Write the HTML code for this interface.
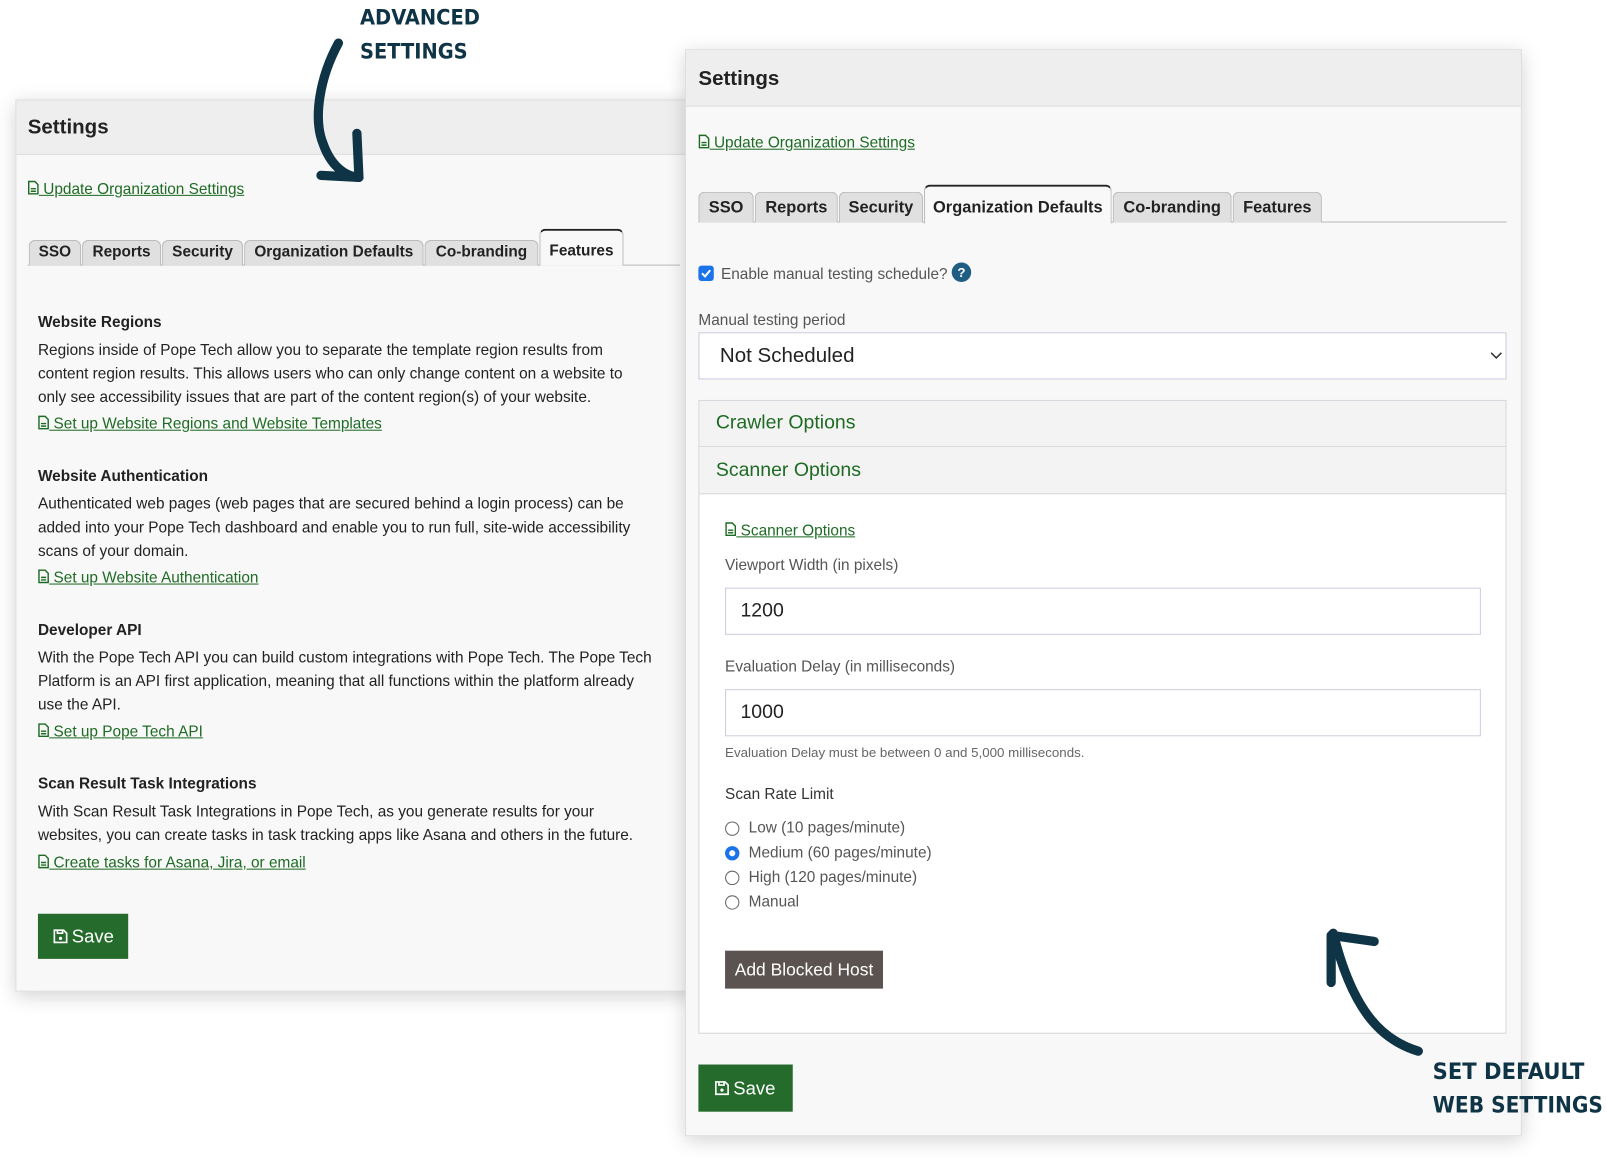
<!DOCTYPE html>
<html><head><meta charset="utf-8"><style>
html,body{margin:0;padding:0;width:1606px;height:1167px;overflow:hidden;background:#fff;}
#w{position:absolute;left:0;top:0;width:1566px;height:1138px;transform:scale(1.02554);transform-origin:0 0;font-family:"Liberation Sans",Arial,sans-serif;color:#222;}
.a{position:absolute;white-space:nowrap;}
.panel{position:absolute;background:#f8f8f8;border:1px solid #ddd;box-shadow:0 4px 18px rgba(0,0,0,.18);}
.hdr{position:absolute;left:0;right:0;top:0;background:#eeeeee;border-bottom:1px solid #ddd;}
.ttl{font-weight:bold;font-size:20px;color:#222;}
.lnk{color:#1e6b24;text-decoration:underline;font-size:15px;}
.tab{position:absolute;background:#e0e0e0;border:1px solid #bbb;border-bottom:none;border-radius:6px 6px 0 0;font-weight:bold;font-size:15px;text-align:center;box-sizing:border-box;color:#222;}
.tab.act{background:#f8f8f8;border:1px solid #bbb;border-top:2px solid #222;border-bottom:none;}
.h{font-weight:bold;font-size:15px;}
.p{font-size:15px;line-height:23px;color:#222;white-space:normal;}
.save{position:absolute;background:#256b2c;color:#fff;font-size:18px;box-sizing:border-box;}
.hand{font-family:"DejaVu Sans Condensed","DejaVu Sans",sans-serif;font-weight:bold;color:#0e3446;}
.inp{position:absolute;background:#fff;border:1px solid #ccd;box-sizing:border-box;}
.lbl{font-size:15px;color:#555;}
.radio{position:absolute;width:14px;height:14px;border:1px solid #666;border-radius:50%;box-sizing:border-box;background:#fff;}
</style></head><body><div id="w">

<!-- left panel -->
<div class="panel" style="left:15px;top:97px;width:660px;height:868px;">
  <div class="hdr" style="height:52px;"></div>
</div>
<div class="a ttl" style="left:27px;top:113px;">Settings</div>
<div class="a lnk" style="left:27px;top:176px;"><svg width="11" height="14" viewBox="0 0 11 14" style="vertical-align:-1px"><path d="M1 1h6l3 3v9H1z M3 8h5M3 10.5h5" fill="none" stroke="#1e6b24" stroke-width="1.4"/></svg> Update Organization Settings</div>
<div class="a" style="left:27px;top:258px;width:636px;border-top:1px solid #bbb;"></div>
<div class="tab" style="left:28px;top:234px;width:51px;height:25px;line-height:22px;">SSO</div>
<div class="tab" style="left:80px;top:234px;width:77px;height:25px;line-height:22px;">Reports</div>
<div class="tab" style="left:158px;top:234px;width:79px;height:25px;line-height:22px;">Security</div>
<div class="tab" style="left:238px;top:234px;width:175px;height:25px;line-height:22px;">Organization Defaults</div>
<div class="tab" style="left:414px;top:234px;width:111px;height:25px;line-height:22px;">Co-branding</div>
<div class="tab act" style="left:526px;top:223px;width:82px;height:36px;line-height:40px;">Features</div>

<div class="a h" style="left:37px;top:306px;">Website Regions</div>
<div class="a p" style="left:37px;top:330px;width:588px;">Regions inside of Pope Tech allow you to separate the template region results from content region results. This allows users who can only change content on a website to only see accessibility issues that are part of the content region(s) of your website.</div>
<div class="a lnk" style="left:37px;top:405px;"><svg width="11" height="14" viewBox="0 0 11 14" style="vertical-align:-1px"><path d="M1 1h6l3 3v9H1z M3 8h5M3 10.5h5" fill="none" stroke="#1e6b24" stroke-width="1.4"/></svg> Set up Website Regions and Website Templates</div>

<div class="a h" style="left:37px;top:456px;">Website Authentication</div>
<div class="a p" style="left:37px;top:480px;width:600px;">Authenticated web pages (web pages that are secured behind a login process) can be added into your Pope Tech dashboard and enable you to run full, site-wide accessibility scans of your domain.</div>
<div class="a lnk" style="left:37px;top:555px;"><svg width="11" height="14" viewBox="0 0 11 14" style="vertical-align:-1px"><path d="M1 1h6l3 3v9H1z M3 8h5M3 10.5h5" fill="none" stroke="#1e6b24" stroke-width="1.4"/></svg> Set up Website Authentication</div>

<div class="a h" style="left:37px;top:606px;">Developer API</div>
<div class="a p" style="left:37px;top:630px;width:608px;">With the Pope Tech API you can build custom integrations with Pope Tech. The Pope Tech Platform is an API first application, meaning that all functions within the platform already use the API.</div>
<div class="a lnk" style="left:37px;top:705px;"><svg width="11" height="14" viewBox="0 0 11 14" style="vertical-align:-1px"><path d="M1 1h6l3 3v9H1z M3 8h5M3 10.5h5" fill="none" stroke="#1e6b24" stroke-width="1.4"/></svg> Set up Pope Tech API</div>

<div class="a h" style="left:37px;top:756px;">Scan Result Task Integrations</div>
<div class="a p" style="left:37px;top:780px;width:590px;">With Scan Result Task Integrations in Pope Tech, as you generate results for your websites, you can create tasks in task tracking apps like Asana and others in the future.</div>
<div class="a lnk" style="left:37px;top:833px;"><svg width="11" height="14" viewBox="0 0 11 14" style="vertical-align:-1px"><path d="M1 1h6l3 3v9H1z M3 8h5M3 10.5h5" fill="none" stroke="#1e6b24" stroke-width="1.4"/></svg> Create tasks for Asana, Jira, or email</div>

<div class="save" style="left:37px;top:891px;width:88px;height:44px;line-height:44px;padding-left:14px;"><svg width="16" height="16" viewBox="0 0 16 16" style="vertical-align:-2px;margin-right:3px"><path d="M2 2h9l3 3v9H2z M5 2v3h5V2" fill="none" stroke="#fff" stroke-width="1.6"/><circle cx="8" cy="10" r="1.6" fill="#fff"/></svg>Save</div>

<!-- right panel -->
<div class="panel" style="left:668px;top:48px;width:814px;height:1058px;background:#f8f8f8;">
  <div class="hdr" style="height:54px;"></div>
</div>
<div class="a ttl" style="left:681px;top:66px;">Settings</div>
<div class="a lnk" style="left:681px;top:131px;"><svg width="11" height="14" viewBox="0 0 11 14" style="vertical-align:-1px"><path d="M1 1h6l3 3v9H1z M3 8h5M3 10.5h5" fill="none" stroke="#1e6b24" stroke-width="1.4"/></svg> Update Organization Settings</div>
<div class="a" style="left:681px;top:216px;width:788px;border-top:1px solid #bbb;"></div>
<div class="tab" style="left:681px;top:187px;width:54px;height:30px;line-height:30px;font-size:16px;">SSO</div>
<div class="tab" style="left:736px;top:187px;width:81px;height:30px;line-height:30px;font-size:16px;">Reports</div>
<div class="tab" style="left:818px;top:187px;width:82px;height:30px;line-height:30px;font-size:16px;">Security</div>
<div class="tab act" style="left:901px;top:180px;width:183px;height:38px;line-height:42px;font-size:16px;">Organization Defaults</div>
<div class="tab" style="left:1085px;top:187px;width:116px;height:30px;line-height:30px;font-size:16px;">Co-branding</div>
<div class="tab" style="left:1202px;top:187px;width:87px;height:30px;line-height:30px;font-size:16px;">Features</div>

<div class="a" style="left:681px;top:259px;width:15px;height:15px;background:#1a73e8;border-radius:3px;"><svg width="15" height="15" viewBox="0 0 15 15" style="position:absolute;left:0;top:0"><path d="M3.5 7.5l3 3 5-6" fill="none" stroke="#fff" stroke-width="2"/></svg></div>
<div class="a lbl" style="left:703px;top:259px;">Enable manual testing schedule?</div>
<div class="a" style="left:928px;top:256px;width:19px;height:19px;border-radius:50%;background:#1f5d83;color:#fff;font-size:13px;font-weight:bold;text-align:center;line-height:19px;">?</div>

<div class="a lbl" style="left:681px;top:304px;">Manual testing period</div>
<div class="inp" style="left:681px;top:324px;width:788px;height:46px;"></div>
<div class="a" style="left:702px;top:336px;font-size:20px;color:#222;">Not Scheduled</div>
<svg class="a" style="left:1453px;top:343px" width="12" height="8" viewBox="0 0 12 8"><path d="M1 1l5 5 5-5" fill="none" stroke="#333" stroke-width="1.5"/></svg>

<div class="a" style="left:681px;top:390px;width:786px;height:616px;border:1px solid #d4d8dd;background:#fff;"></div>
<div class="a" style="left:682px;top:391px;width:786px;height:44px;background:#f3f3f3;border-bottom:1px solid #d4d8dd;"></div>
<div class="a" style="left:682px;top:436px;width:786px;height:45px;background:#f3f3f3;border-bottom:1px solid #d4d8dd;"></div>
<div class="a" style="left:698px;top:402px;font-size:19px;color:#1e6b24;">Crawler Options</div>
<div class="a" style="left:698px;top:448px;font-size:19px;color:#1e6b24;">Scanner Options</div>

<div class="a lnk" style="left:707px;top:509px;"><svg width="11" height="14" viewBox="0 0 11 14" style="vertical-align:-1px"><path d="M1 1h6l3 3v9H1z M3 8h5M3 10.5h5" fill="none" stroke="#1e6b24" stroke-width="1.4"/></svg> Scanner Options</div>
<div class="a lbl" style="left:707px;top:543px;">Viewport Width (in pixels)</div>
<div class="inp" style="left:707px;top:573px;width:737px;height:46px;"></div>
<div class="a" style="left:722px;top:585px;font-size:19px;">1200</div>
<div class="a lbl" style="left:707px;top:642px;">Evaluation Delay (in milliseconds)</div>
<div class="inp" style="left:707px;top:672px;width:737px;height:46px;"></div>
<div class="a" style="left:722px;top:684px;font-size:19px;">1000</div>
<div class="a" style="left:707px;top:726px;font-size:13px;color:#666;">Evaluation Delay must be between 0 and 5,000 milliseconds.</div>
<div class="a" style="left:707px;top:766px;font-size:15px;color:#333;">Scan Rate Limit</div>
<div class="radio" style="left:707px;top:801px;"></div>
<div class="radio" style="left:707px;top:825px;border:4px solid #1a73e8;"></div>
<div class="radio" style="left:707px;top:849px;"></div>
<div class="radio" style="left:707px;top:873px;"></div>
<div class="a lbl" style="left:730px;top:799px;">Low (10 pages/minute)</div>
<div class="a lbl" style="left:730px;top:823px;">Medium (60 pages/minute)</div>
<div class="a lbl" style="left:730px;top:847px;">High (120 pages/minute)</div>
<div class="a lbl" style="left:730px;top:871px;">Manual</div>
<div class="a" style="left:707px;top:927px;width:154px;height:37px;background:#5b5350;color:#fff;font-size:17px;text-align:center;line-height:37px;">Add Blocked Host</div>

<div class="save" style="left:681px;top:1038px;width:92px;height:46px;line-height:46px;padding-left:15px;"><svg width="16" height="16" viewBox="0 0 16 16" style="vertical-align:-2px;margin-right:3px"><path d="M2 2h9l3 3v9H2z M5 2v3h5V2" fill="none" stroke="#fff" stroke-width="1.6"/><circle cx="8" cy="10" r="1.6" fill="#fff"/></svg>Save</div>

<!-- annotations -->
<svg class="a" style="left:0;top:0" width="1566" height="1138" viewBox="0 0 1566 1138">
<g fill="none" stroke="#0e3446" stroke-width="9" stroke-linecap="round" stroke-linejoin="round">
<path d="M330 42 C312 75 305 115 315 140 C322 160 335 172 350 173"/>
<path d="M348 130 L350 173 L313 171"/>
<path d="M1383 1025 C1350 1015 1320 990 1300 910"/>
<path d="M1298 958 L1298 912 L1340 918"/>
</g>
<text x="351" y="24" class="hand" font-size="21" fill="#0e3446" textLength="117" lengthAdjust="spacingAndGlyphs">ADVANCED</text>
<text x="351" y="57" class="hand" font-size="21" fill="#0e3446" textLength="105" lengthAdjust="spacingAndGlyphs">SETTINGS</text>
<text x="1397" y="1052" class="hand" font-size="22" fill="#0e3446" textLength="148" lengthAdjust="spacingAndGlyphs">SET DEFAULT</text>
<text x="1397" y="1085" class="hand" font-size="22" fill="#0e3446" textLength="166" lengthAdjust="spacingAndGlyphs">WEB SETTINGS</text>
</svg>
</div></body></html>
